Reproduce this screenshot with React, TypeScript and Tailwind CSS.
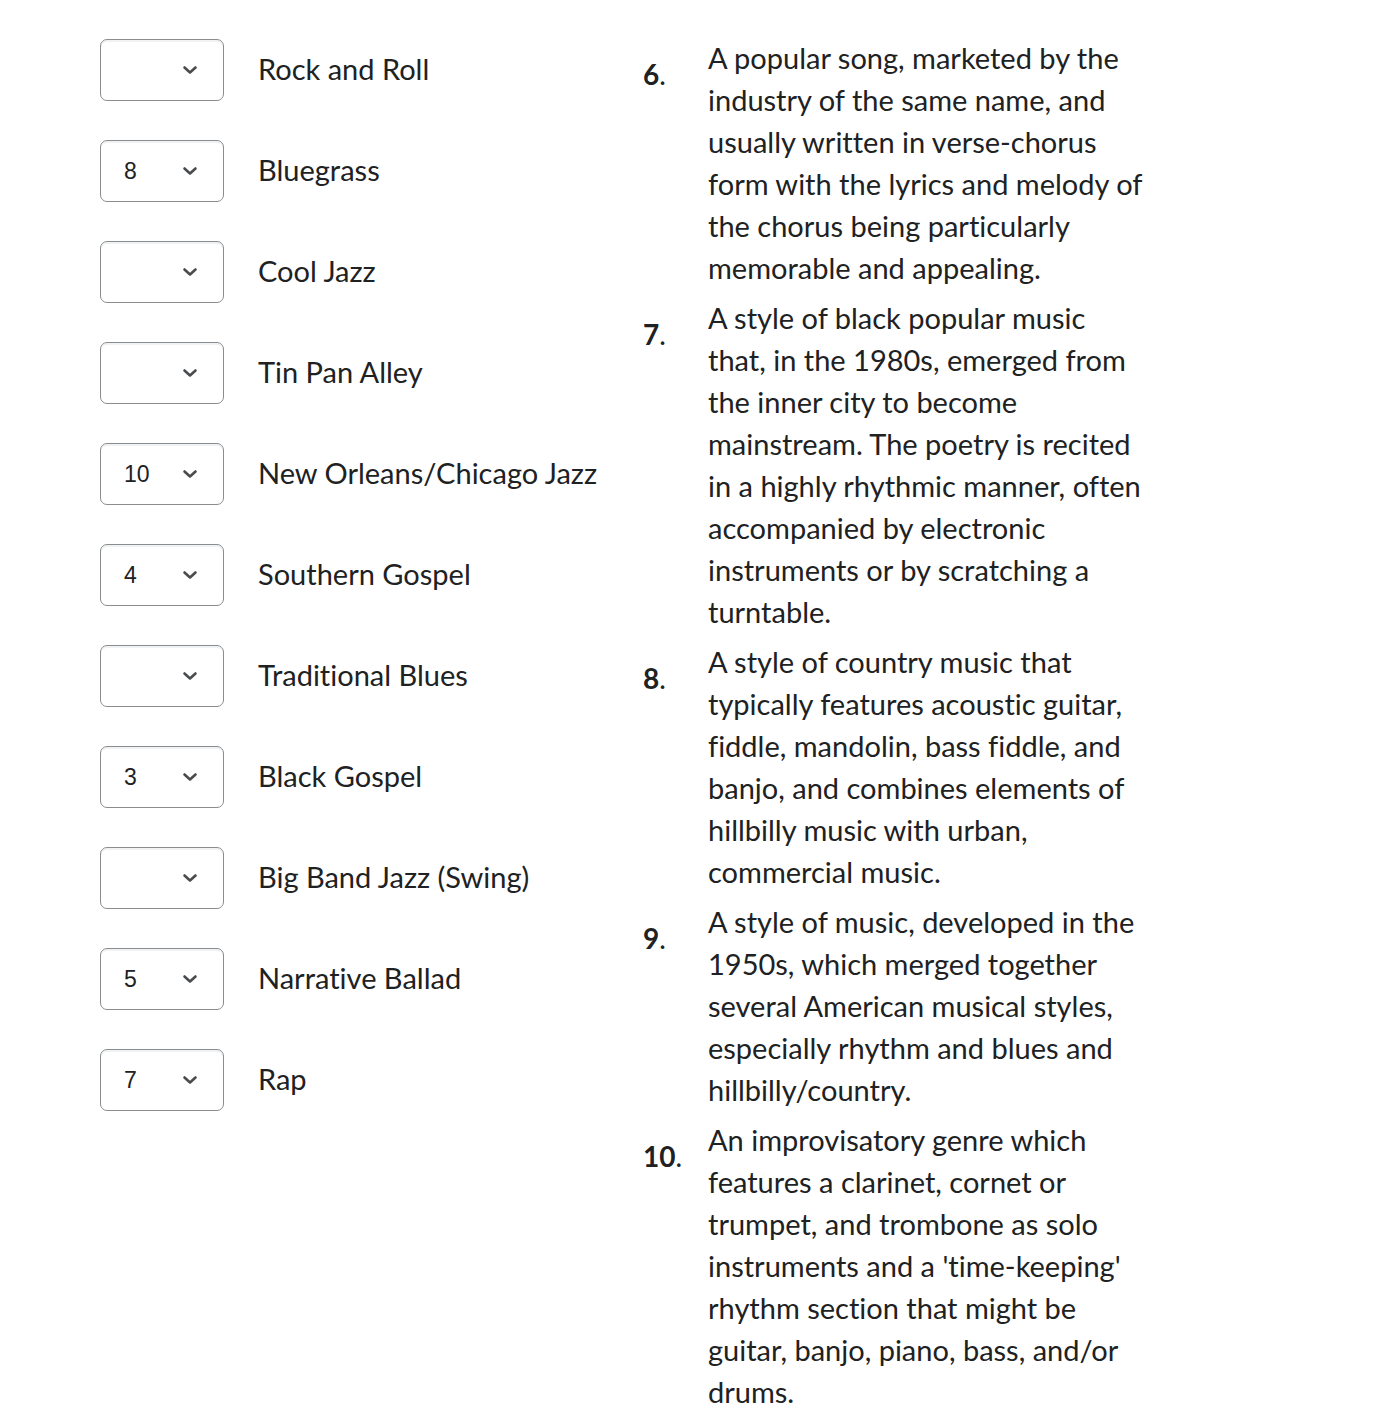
import React from "react";

const rows: { value: string; label: string }[] = [
  { value: "", label: "Rock and Roll" },
  { value: "8", label: "Bluegrass" },
  { value: "", label: "Cool Jazz" },
  { value: "", label: "Tin Pan Alley" },
  { value: "10", label: "New Orleans/Chicago Jazz" },
  { value: "4", label: "Southern Gospel" },
  { value: "", label: "Traditional Blues" },
  { value: "3", label: "Black Gospel" },
  { value: "", label: "Big Band Jazz (Swing)" },
  { value: "5", label: "Narrative Ballad" },
  { value: "7", label: "Rap" },
];

const items: { n: string; text: string }[] = [
  {
    n: "6",
    text: "A popular song, marketed by the industry of the same name, and usually written in verse-chorus form with the lyrics and melody of the chorus being particularly memorable and appealing.",
  },
  {
    n: "7",
    text: "A style of black popular music that, in the 1980s, emerged from the inner city to become mainstream. The poetry is recited in a highly rhythmic manner, often accompanied by electronic instruments or by scratching a turntable.",
  },
  {
    n: "8",
    text: "A style of country music that typically features acoustic guitar, fiddle, mandolin, bass fiddle, and banjo, and combines elements of hillbilly music with urban, commercial music.",
  },
  {
    n: "9",
    text: "A style of music, developed in the 1950s, which merged together several American musical styles, especially rhythm and blues and hillbilly/country.",
  },
  {
    n: "10",
    text: "An improvisatory genre which features a clarinet, cornet or trumpet, and trombone as solo instruments and a 'time-keeping' rhythm section that might be guitar, banjo, piano, bass, and/or drums.",
  },
];

function Chevron() {
  return (
    <svg width="16" height="10" viewBox="0 0 16 10" fill="none">
      <path d="M2.5 2.5L8 7.5L13.5 2.5" stroke="#494c4e" strokeWidth="2.6" strokeLinecap="round" strokeLinejoin="round" />
    </svg>
  );
}

export default function App() {
  return (
    <div
      className="flex w-[1388px] min-h-[1418px] bg-white text-[#202122] [font-variant-ligatures:none]"
      style={{ fontFamily: "Lato, 'Noto Sans', sans-serif" }}
    >
      <div className="w-[643px] shrink-0 pl-[100px] pt-[39px] flex flex-col gap-[39px]">
        {rows.map((r, i) => (
          <div key={i} className="flex items-center h-[62px]">
            <div className="relative w-[124px] h-[62px] rounded-[7px] border border-[#8a8d8f] bg-white shadow-[inset_0_2px_0_0_#f1f2f3] flex items-center">
              <span
                className="pl-[23px] text-[23px] leading-none text-[#202122]"
                style={{ fontFamily: "'Liberation Sans', Arial, sans-serif" }}
              >
                {r.value}
              </span>
              <span className="absolute left-[81px] top-[25px]">
                <Chevron />
              </span>
            </div>
            <div className="ml-[34px] -mt-[2px] text-[29px] leading-[42px] whitespace-nowrap">{r.label}</div>
          </div>
        ))}
      </div>
      <div className="pt-[37px] flex flex-col gap-[8px]">
        {items.map((it) => (
          <div key={it.n} className="flex">
            <div className="w-[65px] shrink-0 pt-[16px] text-[28px] leading-[42px]">
              <span className="font-bold">{it.n}</span>.
            </div>
            <div className="w-[437px] text-[29px] leading-[42px]">{it.text}</div>
          </div>
        ))}
      </div>
    </div>
  );
}
